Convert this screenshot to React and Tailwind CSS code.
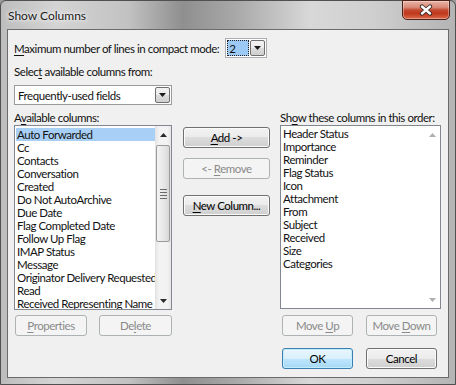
import React from "react";

const U = ({ children }) => (
  <span className="underline underline-offset-[2px] decoration-[1px]">{children}</span>
);

function Btn({ children, disabled, primary, className = "" }) {
  let cls =
    "h-[21px] flex items-center justify-center rounded-[3px] border whitespace-nowrap leading-[15px] ";
  if (disabled) {
    cls += "border-[#adb2b5] bg-[#f4f4f4] text-[#8a8a8a] ";
  } else if (primary) {
    cls +=
      "border-[#3c7fb1] bg-[linear-gradient(#eaf6fd_0%,#d9f0fc_50%,#bee6fd_50%,#a7d9f5_100%)] shadow-[inset_0_0_0_1px_#c4ecff] text-black ";
  } else {
    cls +=
      "border-[#707070] bg-[linear-gradient(#f2f2f2_0%,#ebebeb_50%,#dddddd_50%,#cfcfcf_100%)] shadow-[inset_0_0_0_1px_#fbfbfb] text-black ";
  }
  return <div className={cls + className}>{children}</div>;
}

const DownTri = ({ color = "#000" }) => (
  <svg width="7" height="4" viewBox="0 0 7 4">
    <path d="M0 0 H7 L3.5 4 Z" fill={color} />
  </svg>
);
const UpTri = ({ color = "#000" }) => (
  <svg width="7" height="4" viewBox="0 0 7 4">
    <path d="M0 4 H7 L3.5 0 Z" fill={color} />
  </svg>
);

function DropBtn({ className = "" }) {
  return (
    <div
      className={
        "w-[15px] flex items-center justify-center border border-[#707070] rounded-[2px] bg-[linear-gradient(#f2f2f2_0%,#ebebeb_50%,#dddddd_50%,#cfcfcf_100%)] " +
        className
      }
    >
      <DownTri color="#1a1a1a" />
    </div>
  );
}

const leftItems = [
  "Auto Forwarded",
  "Cc",
  "Contacts",
  "Conversation",
  "Created",
  "Do Not AutoArchive",
  "Due Date",
  "Flag Completed Date",
  "Follow Up Flag",
  "IMAP Status",
  "Message",
  "Originator Delivery Requested",
  "Read",
  "Received Representing Name",
];

const rightItems = [
  "Header Status",
  "Importance",
  "Reminder",
  "Flag Status",
  "Icon",
  "Attachment",
  "From",
  "Subject",
  "Received",
  "Size",
  "Categories",
];

export default function App() {
  return (
    <div className="w-[456px] h-[385px] overflow-hidden font-['Lato',sans-serif] text-[11.5px] tracking-[-0.45px] text-[#111] bg-[#9a9a9a]">
      <div className="relative w-full h-full flex flex-col rounded-t-[6px] border border-[#505050] bg-[linear-gradient(90deg,#bdbdbd_0%,#d4d4d4_12%,#c2c2c2_28%,#8f8f8f_40%,#a9a9a9_52%,#d8d8d8_68%,#cfcfcf_82%,#b4b4b4_100%)]">
        {/* Title bar */}
        <div className="h-[28px] flex items-center pl-[7px] shrink-0">
          <span className="text-[12px] tracking-[0px] text-[#1a1a1a] leading-[15px] [text-shadow:0_0_6px_#ffffff,0_0_3px_#ffffff]">
            Show Columns
          </span>
        </div>
        <div className="absolute top-[-1px] right-[5px] w-[48px] h-[20px] rounded-b-[5px] border border-[#4e2118] bg-[linear-gradient(#e8b3a6_0%,#d98a78_35%,#c44a30_50%,#c0391e_70%,#dc6a48_100%)] shadow-[inset_0_0_0_1px_rgba(255,255,255,0.35)] flex items-center justify-center">
          <svg width="16" height="12" viewBox="0 0 16 12">
            <path d="M4 2.5 L12 9.5 M12 2.5 L4 9.5" stroke="#3a2a28" strokeWidth="4.2" strokeLinecap="round" />
            <path d="M4 2.5 L12 9.5 M12 2.5 L4 9.5" stroke="#ffffff" strokeWidth="2.4" strokeLinecap="round" />
          </svg>
        </div>

        {/* Client area */}
        <div className="mx-[6px] mb-[6px] flex-1 border border-[#6b6b6b] bg-[#f0f0f0] pl-[6px] pr-[6px] flex flex-col">
          {/* Max lines row */}
          <div className="mt-[8px] h-[20px] flex items-center">
            <span className="leading-[15px]">
              <U>M</U>aximum number of lines in compact mode:
            </span>
            <div className="ml-[6px] w-[42px] h-[20px] border border-[#abadb3] bg-white flex p-[1px] gap-[1px]">
              <div className="flex-1 bg-[#9cc9f5] outline-1 outline-dotted outline-[#222] -outline-offset-1 flex items-center pl-[2px] leading-[13px]">
                2
              </div>
              <DropBtn />
            </div>
          </div>

          <div className="mt-[6px] h-[15px] leading-[15px]">
            Selec<U>t</U> available columns from:
          </div>

          <div className="mt-[6px] w-[158px] h-[20px] border border-[#9a9a9a] bg-white flex p-[1px]">
            <div className="flex-1 flex items-center pl-[2px] leading-[15px]">Frequently-used fields</div>
            <DropBtn />
          </div>

          {/* Main three columns */}
          <div className="mt-[5px] flex">
            {/* Left column */}
            <div className="w-[158px] flex flex-col">
              <div className="h-[15px] leading-[15px]">
                A<U>v</U>ailable columns:
              </div>
              <div className="h-[185px] border border-[#828790] bg-white flex">
                <div className="flex-1 overflow-hidden pt-[2px] pl-[1px]">
                  {leftItems.map((t, i) => (
                    <div
                      key={t}
                      className={
                        "h-[13px] leading-[13px] pl-[1px] whitespace-nowrap " +
                        (i === 0 ? "bg-[#a8cff5]" : "")
                      }
                    >
                      {t}
                    </div>
                  ))}
                </div>
                <div className="w-[16px] flex flex-col bg-[linear-gradient(90deg,#e2e2e2,#f3f3f3_25%,#f3f3f3_75%,#e6e6e6)]">
                  <div className="h-[17px] flex items-center justify-center">
                    <UpTri color="#2a2a2a" />
                  </div>
                  <div className="mt-[2px] h-[97px] mx-[1px] rounded-[2px] border border-[#9a9a9a] bg-[linear-gradient(90deg,#f4f4f4,#e8e8e8_50%,#d8d8d8)] flex flex-col items-center justify-center gap-[2px]">
                    <div className="w-[7px] h-[1px] bg-[#6a6a6a]" />
                    <div className="w-[7px] h-[1px] bg-[#6a6a6a]" />
                    <div className="w-[7px] h-[1px] bg-[#6a6a6a]" />
                    <div className="w-[7px] h-[1px] bg-[#6a6a6a]" />
                  </div>
                  <div className="flex-1" />
                  <div className="h-[17px] flex items-center justify-center">
                    <DownTri color="#2a2a2a" />
                  </div>
                </div>
              </div>
              <div className="mt-[5px] pl-[1px] flex gap-[12px]">
                <Btn disabled className="w-[72px]">
                  <span>
                    <U>P</U>roperties
                  </span>
                </Btn>
                <Btn disabled className="w-[73px]">
                  <span>
                    De<U>l</U>ete
                  </span>
                </Btn>
              </div>
            </div>

            {/* Middle column */}
            <div className="ml-[11px] w-[87px] pt-[17px] flex flex-col">
              <Btn className="h-[20px]">
                <span>
                  <U>A</U>dd -&gt;
                </span>
              </Btn>
              <Btn disabled className="h-[20px] mt-[10px]">
                <span>
                  &lt;- <U>R</U>emove
                </span>
              </Btn>
              <Btn className="h-[20px] mt-[16px]">
                <span>
                  <U>N</U>ew Column...
                </span>
              </Btn>
            </div>

            {/* Right column */}
            <div className="ml-[10px] w-[161px] flex flex-col">
              <div className="h-[15px] leading-[15px] whitespace-nowrap">
                Sh<U>o</U>w these columns in this order:
              </div>
              <div className="h-[184px] border border-[#828790] bg-white flex">
                <div className="flex-1 overflow-hidden pt-[1px] pl-[2px]">
                  {rightItems.map((t) => (
                    <div key={t} className="h-[13px] leading-[13px] whitespace-nowrap">
                      {t}
                    </div>
                  ))}
                </div>
                <div className="w-[16px] flex flex-col">
                  <div className="h-[17px] flex items-center justify-center">
                    <UpTri color="#b0b0b0" />
                  </div>
                  <div className="flex-1" />
                  <div className="h-[17px] flex items-center justify-center">
                    <DownTri color="#b0b0b0" />
                  </div>
                </div>
              </div>
              <div className="mt-[6px] pl-[2px] flex gap-[13px]">
                <Btn disabled className="w-[71px]">
                  <span>
                    Move <U>U</U>p
                  </span>
                </Btn>
                <Btn disabled className="w-[71px]">
                  <span>
                    Move <U>D</U>own
                  </span>
                </Btn>
              </div>
              <div className="mt-[12px] pl-[2px] flex gap-[13px]">
                <Btn primary className="w-[71px]">
                  OK
                </Btn>
                <Btn className="w-[71px]">Cancel</Btn>
              </div>
            </div>
          </div>
        </div>
      </div>
    </div>
  );
}
